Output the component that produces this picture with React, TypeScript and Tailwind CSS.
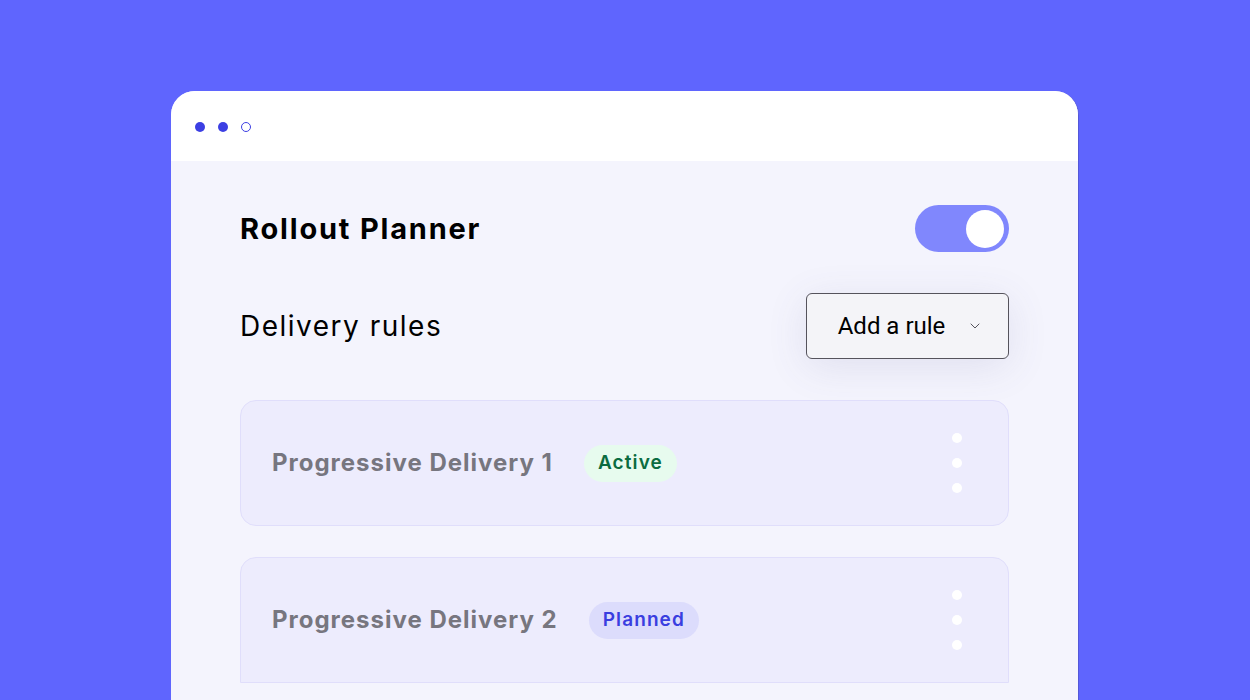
import { ChevronDown } from "lucide-react";

const font = { fontFamily: "Inter, 'Noto Sans', sans-serif" };

function Kebab() {
    return (
        <div className="flex flex-col gap-[15px] mr-[46px]">
            <span className="w-[10px] h-[10px] rounded-full bg-white" />
            <span className="w-[10px] h-[10px] rounded-full bg-white" />
            <span className="w-[10px] h-[10px] rounded-full bg-white" />
        </div>
    );
}

interface RuleCardProps {
    name: string;
    badge: string;
    badgeClass: string;
    clipped?: boolean;
}

function RuleCard({ name, badge, badgeClass, clipped }: RuleCardProps) {
    return (
        <div
            className={`h-[126px] flex items-center bg-[#edecfd] border border-[#e0defb] pl-[31px] ${
                clipped ? "rounded-t-[16px]" : "rounded-[16px]"
            }`}
        >
            <span className="text-[24px] font-bold text-[#77767f] tracking-[1px]">{name}</span>
            <span className={`ml-[31px] h-[37px] px-[14px] flex items-center rounded-full text-[19px] font-semibold tracking-[1.1px] ${badgeClass}`}>
                {badge}
            </span>
            <div className="ml-auto">
                <Kebab />
            </div>
        </div>
    );
}

export default function App() {
    return (
        <div className="w-[1250px] h-[700px] overflow-hidden bg-[#5f65fe] pt-[91px] pl-[171px]" style={font}>
            <div className="w-[908px] h-[700px] rounded-t-[24px] overflow-hidden bg-[#f4f4fd] border-r border-[#5457d9]">
                <div className="h-[70px] bg-white flex items-center gap-[13px] pl-[24px] pt-[2px]">
                    <span className="w-[10px] h-[10px] rounded-full bg-[#3c3fe3]" />
                    <span className="w-[10px] h-[10px] rounded-full bg-[#3c3fe3]" />
                    <span className="w-[10px] h-[10px] rounded-full border-[1.5px] border-[#3c3fe3]" />
                </div>

                <div className="px-[69px] pt-[44px]">
                    <div className="flex items-center justify-between">
                        <h1 className="text-[29px] font-bold text-black tracking-[1.8px]">Rollout Planner</h1>
                        <div className="w-[94px] h-[47px] rounded-full bg-[#8087fd] flex items-center justify-end pr-[5px]">
                            <span className="w-[38px] h-[38px] rounded-full bg-white" />
                        </div>
                    </div>

                    <div className="flex items-center justify-between mt-[41px]">
                        <h2 className="text-[28px] font-normal text-black tracking-[1.5px]">Delivery rules</h2>
                        <button
                            className="w-[203px] h-[66px] rounded-[6px] border border-[#55535c] bg-[#f4f4f8] shadow-[0_8px_40px_rgba(80,80,140,0.12)] flex items-center justify-center gap-[22px] pl-[6px] text-[24px] text-black"
                            style={{ fontFamily: "Roboto, sans-serif" }}
                        >
                            Add a rule
                            <ChevronDown size={16} strokeWidth={1.5} className="text-[#55535c]" />
                        </button>
                    </div>

                    <div className="flex flex-col gap-[31px] mt-[41px]">
                        <RuleCard name="Progressive Delivery 1" badge="Active" badgeClass="bg-[#e7fbee] text-[#0b6b40]" />
                        <RuleCard name="Progressive Delivery 2" badge="Planned" badgeClass="bg-[#dcdcfc] text-[#3a3ee0]" clipped />
                    </div>
                </div>
            </div>
        </div>
    );
}
